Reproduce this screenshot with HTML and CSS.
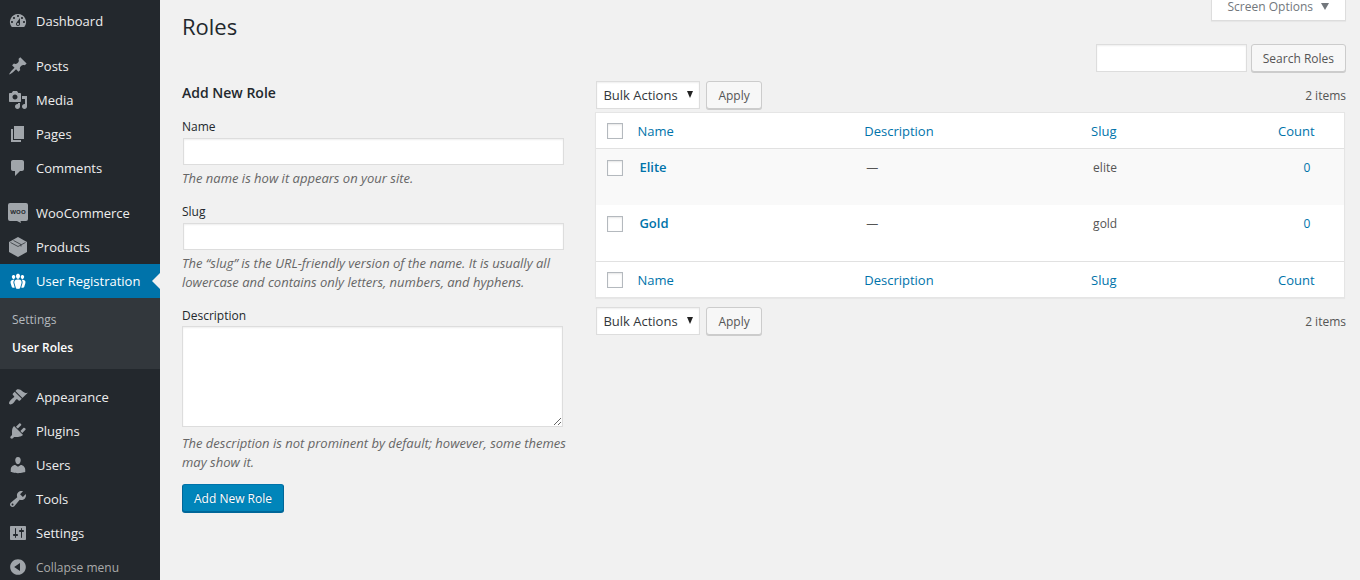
FILE: index.html
```html
<!DOCTYPE html>
<html lang="en">
<head>
    <meta charset="utf-8">
    <title>Roles</title>
    <link rel="stylesheet" href="styles.css">
</head>
<body>
    <nav class="admin-menu">
        <ul class="menu">
            <li><a href="#" class="menu-link">
                <svg class="icon" viewBox="0 0 20 20"><path fill-rule="evenodd" d="M3.76 16h12.48A7.998 7.998 0 0 0 10 3a7.998 7.998 0 0 0-6.24 13zM10 4c.55 0 1 .45 1 1s-.45 1-1 1-1-.45-1-1 .45-1 1-1zM6 6c.55 0 1 .45 1 1s-.45 1-1 1-1-.45-1-1 .45-1 1-1zm8 0c.55 0 1 .45 1 1s-.45 1-1 1-1-.45-1-1 .45-1 1-1zm-5.37 5.55L12 7v6c0 1.1-.9 2-2 2s-2-.9-2-2c0-.57.24-1.08.63-1.45zM4 10c.55 0 1 .45 1 1s-.45 1-1 1-1-.45-1-1 .45-1 1-1zm12 0c.55 0 1 .45 1 1s-.45 1-1 1-1-.45-1-1 .45-1 1-1zm-5 3c0-.55-.45-1-1-1s-1 .45-1 1 .45 1 1 1 1-.45 1-1z"/></svg>
                Dashboard</a></li>
            <li class="separator"></li>
            <li><a href="#" class="menu-link">
                <svg class="icon" viewBox="0 0 20 20"><path d="M10.44 3.02l1.82-1.82 6.36 6.35-1.83 1.82c-1.05-.68-2.48-.57-3.41.36l-.75.75c-.92.93-1.04 2.35-.35 3.41l-1.83 1.82-2.41-2.41-2.8 2.79c-.42.42-3.38 2.71-3.8 2.29s1.86-3.39 2.28-3.81l2.79-2.79L4.1 9.36l1.83-1.82c1.05.69 2.48.57 3.4-.36l.75-.75c.93-.92 1.05-2.35.36-3.41z"/></svg>
                Posts</a></li>
            <li><a href="#" class="menu-link">
                <svg class="icon" viewBox="0 0 20 20"><path fill-rule="evenodd" d="M13 11V4c0-.55-.45-1-1-1h-1.67L9 1H5L3.67 3H2c-.55 0-1 .45-1 1v7c0 .55.45 1 1 1h10c.55 0 1-.45 1-1zM7 4.5c1.38 0 2.5 1.12 2.5 2.5S8.38 9.5 7 9.5 4.5 8.38 4.5 7 5.62 4.5 7 4.5zM14 6h5v10.5c0 1.38-1.12 2.5-2.5 2.5S14 17.88 14 16.5s1.12-2.5 2.5-2.5c.17 0 .34.02.5.05V9h-3V6zM10 14.05V13h2v3.5c0 1.38-1.12 2.5-2.5 2.5S7 17.88 7 16.5 8.12 14 9.5 14c.17 0 .34.02.5.05z"/></svg>
                Media</a></li>
            <li><a href="#" class="menu-link">
                <svg class="icon" viewBox="0 0 20 20"><path d="M6 15V2h10v13H6zM5 16h8v2H3V5h2v11z"/></svg>
                Pages</a></li>
            <li><a href="#" class="menu-link">
                <svg class="icon" viewBox="0 0 20 20"><path d="M5 2h9c1.1 0 2 .9 2 2v7c0 1.1-.9 2-2 2h-2l-5 5v-5H5c-1.1 0-2-.9-2-2V4c0-1.1.9-2 2-2z"/></svg>
                Comments</a></li>
            <li class="separator"></li>
            <li><a href="#" class="menu-link">
                <svg class="icon" viewBox="0 0 20 20"><path d="M2 0h16a2 2 0 0 1 2 2v14a2 2 0 0 1-2 2h-5.500l.5 2-4-2H2a2 2 0 0 1-2-2V2a2 2 0 0 1 2-2z"/><text class="woo" x="10" y="11" text-anchor="middle">WOO</text></svg>
                WooCommerce</a></li>
            <li><a href="#" class="menu-link">
                <svg class="icon" viewBox="0 0 20 20"><path d="M10 0l9 5v10l-9 5-9-5V5z"/><path class="cut" d="M2.500 5.500L10 9.500l7.500-4M5.500 3.500l7.500 4v2"/></svg>
                Products</a></li>
            <li><a href="#" class="menu-link current">
                <svg class="icon" viewBox="0 0 20 20"><path d="M8.030 4.460c-.29 1.280.55 3.460 1.970 3.460 1.410 0 2.250-2.180 1.960-3.460-.22-.98-1.080-1.630-1.960-1.630-.89 0-1.740.65-1.970 1.630zm-4.130.9c-.25 1.080.47 2.930 1.670 2.930s1.920-1.850 1.670-2.930c-.19-.83-.92-1.390-1.670-1.390s-1.480.56-1.670 1.390zm8.860 0c-.25 1.080.47 2.930 1.660 2.930 1.200 0 1.920-1.850 1.670-2.930-.19-.83-.92-1.390-1.670-1.390-.74 0-1.470.56-1.660 1.390zm-.59 11.430l1.250-4.300C14.200 10 12.710 8.470 10 8.470c-2.720 0-4.210 1.530-3.440 4.020l1.260 4.300C8.050 17.510 9 18 10 18c.98 0 1.940-.49 2.170-1.210zm-6.100-7.630c-.49.67-.96 1.830-.42 3.590l1.120 3.790c-.34.2-.77.31-1.200.31-.85 0-1.650-.41-1.850-1.030l-1.070-3.650c-.65-2.110.61-3.400 2.920-3.400.27 0 .54.02.79.06-.1.1-.2.22-.29.33zm8.350-.39c2.310 0 3.580 1.290 2.920 3.400l-1.070 3.650c-.2.62-1 1.030-1.850 1.030-.43 0-.86-.11-1.200-.31l1.110-3.770c.55-1.780.08-2.940-.42-3.610-.08-.11-.18-.23-.28-.33.25-.04.51-.06.79-.06z"/></svg>
                User Registration</a>
                <ul class="submenu">
                    <li><a href="#">Settings</a></li>
                    <li><a href="#" class="active">User Roles</a></li>
                </ul>
            </li>
            <li class="separator"></li>
            <li><a href="#" class="menu-link">
                <svg class="icon" viewBox="0 0 20 20"><path d="M14.480 11.060L7.410 3.990l1.500-1.500c.5-.56 2.300-.47 3.510.32 1.210.8 1.430 1.280 2.910 2.100 1.180.64 2.450 1.260 4.450.85zm-.71.71L6.700 4.700 4.930 6.470c-.39.39-.39 1.020 0 1.410l1.060 1.060c.39.39.39 1.030 0 1.420-.6.6-1.430 1.110-2.210 1.690-.35.26-.7.53-1.010.84C1.430 14.230.4 16.080 1.400 17.070c.99 1 2.840-.03 4.180-1.360.31-.31.58-.66.85-1.020.57-.78 1.080-1.610 1.690-2.210.39-.39 1.020-.39 1.410 0l1.060 1.060c.39.39 1.020.39 1.410 0z"/></svg>
                Appearance</a></li>
            <li><a href="#" class="menu-link">
                <svg class="icon" viewBox="0 0 20 20"><path d="M13.110 4.360L9.870 7.600 8 5.730l3.240-3.240c.35-.34 1.050-.2 1.560.32.52.51.66 1.210.31 1.550zm-8 1.770l.91-1.120 9.010 9.010-1.190.84c-.71.71-2.630 1.160-3.820 1.160H6.140L4.900 17.260c-.59.59-1.540.59-2.120 0-.59-.58-.59-1.530 0-2.120l1.240-1.240v-3.880c0-1.130.4-3.190 1.090-3.890zm7.260 3.970l3.240-3.240c.34-.35 1.040-.21 1.550.31.52.51.66 1.210.31 1.550l-3.240 3.250z"/></svg>
                Plugins</a></li>
            <li><a href="#" class="menu-link">
                <svg class="icon" viewBox="0 0 20 20"><path d="M10 9.250c-2.270 0-2.730-3.440-2.730-3.440C7 4.020 7.820 2 9.970 2c2.160 0 2.980 2.020 2.710 3.810 0 0-.41 3.440-2.680 3.440zm0 2.570L12.720 10c2.390 0 4.520 2.330 4.520 4.530v2.490s-3.650 1.130-7.240 1.130c-3.650 0-7.240-1.130-7.240-1.130v-2.490c0-2.250 1.940-4.480 4.470-4.480z"/></svg>
                Users</a></li>
            <li><a href="#" class="menu-link">
                <svg class="icon" viewBox="0 0 20 20"><path fill-rule="evenodd" d="M16.680 9.770c-1.340 1.340-3.300 1.670-4.950.99l-5.410 6.520c-.99.99-2.590.99-3.580 0s-.99-2.590 0-3.570l6.520-5.420c-.68-1.650-.35-3.610.99-4.950 1.280-1.280 3.120-1.620 4.720-1.060l-2.890 2.890 2.820 2.820 2.860-2.870c.53 1.580.18 3.390-1.080 4.650zM3.810 16.210c.4.39 1.040.39 1.430 0 .4-.4.4-1.040 0-1.430-.39-.4-1.030-.4-1.430 0-.39.39-.39 1.030 0 1.430z"/></svg>
                Tools</a></li>
            <li><a href="#" class="menu-link">
                <svg class="icon" viewBox="0 0 20 20"><path fill-rule="evenodd" d="M18 16V4c0-.55-.45-1-1-1H3c-.55 0-1 .45-1 1v12c0 .55.45 1 1 1h14c.55 0 1-.45 1-1zM8 11h1c.55 0 1 .45 1 1s-.45 1-1 1H8v1.500c0 .28-.22.5-.5.5s-.5-.22-.5-.5V13H6c-.55 0-1-.45-1-1s.45-1 1-1h1V5.500c0-.28.22-.5.5-.5s.5.22.5.5V11zm5-2h-1c-.55 0-1-.45-1-1s.45-1 1-1h1V5.500c0-.28.22-.5.5-.5s.5.22.5.5V7h1c.55 0 1 .45 1 1s-.45 1-1 1h-1v5.500c0 .28-.22.5-.5.5s-.5-.22-.5-.5V9z"/></svg>
                Settings</a></li>
            <li><button type="button" class="menu-link collapse">
                <svg class="icon" viewBox="0 0 20 20"><path fill-rule="evenodd" d="M10 2.160c4.330 0 7.840 3.510 7.840 7.840s-3.510 7.840-7.840 7.840S2.160 14.330 2.160 10 5.710 2.160 10 2.160zm2 11.720V6.120L6.180 9.970z"/></svg>
                Collapse menu</button></li>
        </ul>
    </nav>

    <main class="content">
        <div class="page-header">
            <h1>Roles</h1>
            <button type="button" class="screen-options">Screen Options <svg class="caret" viewBox="0 0 8 7"><path d="M0 0h8L4 7z"/></svg></button>
        </div>

        <form class="search-box">
            <input type="search" class="text-input" aria-label="Search Roles">
            <button type="submit" class="button">Search Roles</button>
        </form>

        <div class="columns">
            <form class="add-role">
                <h2>Add New Role</h2>
                <div class="form-field">
                    <label for="role-name">Name</label>
                    <input type="text" id="role-name" class="text-input">
                    <p>The name is how it appears on your site.</p>
                </div>
                <div class="form-field">
                    <label for="role-slug">Slug</label>
                    <input type="text" id="role-slug" class="text-input">
                    <p>The “slug” is the URL-friendly version of the name. It is usually all lowercase and contains only letters, numbers, and hyphens.</p>
                </div>
                <div class="form-field">
                    <label for="role-description">Description</label>
                    <textarea id="role-description" class="text-input"></textarea>
                    <p>The description is not prominent by default; however, some themes may show it.</p>
                </div>
                <button type="submit" class="button button-primary">Add New Role</button>
            </form>

            <section class="role-list">
                <div class="table-nav">
                    <select class="bulk-select" aria-label="Bulk action">
                        <option>Bulk Actions</option>
                        <option>Delete</option>
                    </select>
                    <button type="button" class="button">Apply</button>
                    <span class="item-count">2 items</span>
                </div>

                <table class="roles-table">
                    <thead>
                        <tr>
                            <th class="col-check"><input type="checkbox" aria-label="Select all"></th>
                            <th><a href="#">Name</a></th>
                            <th><a href="#">Description</a></th>
                            <th class="col-slug"><a href="#">Slug</a></th>
                            <th class="col-count"><a href="#">Count</a></th>
                        </tr>
                    </thead>
                    <tbody>
                        <tr>
                            <td class="col-check"><input type="checkbox" aria-label="Select Elite"></td>
                            <td><a href="#" class="row-title">Elite</a></td>
                            <td>—</td>
                            <td>elite</td>
                            <td class="col-count"><a href="#">0</a></td>
                        </tr>
                        <tr>
                            <td class="col-check"><input type="checkbox" aria-label="Select Gold"></td>
                            <td><a href="#" class="row-title">Gold</a></td>
                            <td>—</td>
                            <td>gold</td>
                            <td class="col-count"><a href="#">0</a></td>
                        </tr>
                    </tbody>
                    <tfoot>
                        <tr>
                            <th class="col-check"><input type="checkbox" aria-label="Select all"></th>
                            <th><a href="#">Name</a></th>
                            <th><a href="#">Description</a></th>
                            <th><a href="#">Slug</a></th>
                            <th class="col-count"><a href="#">Count</a></th>
                        </tr>
                    </tfoot>
                </table>

                <div class="table-nav bottom">
                    <select class="bulk-select" aria-label="Bulk action">
                        <option>Bulk Actions</option>
                        <option>Delete</option>
                    </select>
                    <button type="button" class="button">Apply</button>
                    <span class="item-count">2 items</span>
                </div>
            </section>
        </div>
    </main>
</body>
</html>
```

FILE: styles.css
```css
* {
    margin: 0;
    padding: 0;
    box-sizing: border-box;
}

body {
    display: flex;
    height: 100vh;
    overflow: hidden;
    background: #f1f1f1;
    color: #444;
    font-family: 'Segoe UI', 'Open Sans', sans-serif;
    font-size: 12px;
    line-height: 19px;
}

button,
input,
select,
textarea {
    font: inherit;
    color: inherit;
}

a {
    color: #0073aa;
    text-decoration: none;
}

ul {
    list-style: none;
}

/* Admin menu */
.admin-menu {
    flex: 0 0 160px;
    background: #23282d;
    overflow: hidden;
}

.menu {
    padding-top: 4px;
}

.menu-link {
    position: relative;
    display: flex;
    align-items: center;
    gap: 8px;
    width: 100%;
    height: 34px;
    padding: 0 8px;
    color: #eee;
    font-size: 13px;
    white-space: nowrap;
}

.icon {
    flex: none;
    width: 20px;
    height: 20px;
    fill: #a0a5aa;
}

.cut {
    fill: none;
    stroke: #23282d;
    stroke-width: 1;
    opacity: 0.7;
}

.woo {
    fill: #23282d;
    font-size: 6px;
    font-weight: 700;
}

.separator {
    height: 11px;
}

.menu-link.current {
    background: #0073aa;
    color: #fff;
}

.menu-link.current .icon {
    fill: #fff;
}

.menu-link.current::after {
    content: '';
    position: absolute;
    right: 0;
    top: 9px;
    border: 8px solid transparent;
    border-left: 0;
    border-right-color: #f1f1f1;
}

.submenu {
    padding: 8px 0 7px;
    background: #32373c;
}

.submenu a {
    display: block;
    padding: 0 12px;
    color: #b4b9be;
    font-size: 12px;
    line-height: 28px;
}

.submenu a.active {
    color: #fff;
    font-weight: 600;
}

.collapse {
    border: none;
    background: none;
    color: #aaa;
    font-size: 12px;
    cursor: pointer;
}

/* Page content */
.content {
    flex: 1;
    min-width: 0;
    padding: 0 14px 0 22px;
}

.page-header {
    display: flex;
    justify-content: space-between;
    align-items: flex-start;
    height: 44px;
}

h1 {
    padding-top: 11px;
    color: #23282d;
    font-size: 22px;
    font-weight: 400;
    line-height: 30px;
}

.screen-options {
    display: flex;
    align-items: center;
    gap: 8px;
    height: 21px;
    padding: 0 16px 8px;
    border: 1px solid #ddd;
    border-top: none;
    background: #fff;
    color: #72777c;
    box-shadow: 0 1px 1px rgba(0,0,0,0.04);
    cursor: pointer;
}

.caret {
    width: 8px;
    height: 7px;
    fill: #72777c;
}

.text-input {
    padding: 3px 5px;
    border: 1px solid #ddd;
    background: #fff;
    box-shadow: inset 0 1px 2px rgba(0,0,0,0.07);
}

.button {
    height: 28px;
    padding: 0 11px;
    border: 1px solid #ccc;
    border-radius: 3px;
    background: #f7f7f7;
    color: #555;
    box-shadow: 0 1px 0 #ccc;
    white-space: nowrap;
    cursor: pointer;
}

.button-primary {
    border-color: #0073aa #006799 #006799;
    background: #0085ba;
    color: #fff;
    box-shadow: 0 1px 0 #006799;
    text-shadow: 0 -1px 1px #006799;
}

.search-box {
    display: flex;
    justify-content: flex-end;
    gap: 4px;
}

.search-box .text-input {
    width: 151px;
    height: 28px;
}

.columns {
    display: flex;
    padding-top: 9px;
}

/* Add form */
.add-role {
    flex: 0 0 35%;
    padding-right: 21px;
}

h2 {
    margin: 2px 0 14px;
    color: #23282d;
    font-size: 14px;
    font-weight: 600;
    line-height: 20px;
}

.form-field {
    margin-bottom: 14px;
}

.form-field:last-of-type {
    margin-bottom: 12px;
}

.form-field label {
    display: block;
    color: #23282d;
}

.form-field input {
    display: block;
    width: calc(100% - 5px);
    height: 27px;
    margin: 2px 0 4px 1px;
}

.form-field textarea {
    display: block;
    width: calc(100% - 5px);
    height: 101px;
    margin: 1px 0 7px;
}

.form-field p {
    color: #666;
    font-size: 13px;
    font-style: italic;
}

/* Role list */
.role-list {
    flex: 1;
    min-width: 0;
    padding: 0 1px 0 6px;
}

.table-nav {
    display: flex;
    align-items: center;
    gap: 6px;
    height: 28px;
    margin: 0 -1px 3px 1px;
}

.table-nav.bottom {
    margin-top: 9px;
}

.bulk-select {
    width: 104px;
    height: 28px;
    padding: 0 6px;
    border: 1px solid #ddd;
    appearance: none;
    background: #fff url("data:image/svg+xml,%3Csvg xmlns='http://www.w3.org/2000/svg' width='6' height='7'%3E%3Cpath d='M0 0h6L3 7z' fill='%23222'/%3E%3C/svg%3E") no-repeat right 6px top 9px;
    color: #32373c;
    font-size: 13px;
    box-shadow: inset 0 1px 2px rgba(0,0,0,0.07);
}

.item-count {
    margin-left: auto;
    color: #555;
}

.roles-table {
    width: 100%;
    border: 1px solid #e5e5e5;
    border-spacing: 0;
    table-layout: fixed;
    background: #fff;
    box-shadow: 0 1px 1px rgba(0,0,0,0.04);
    color: #555;
}

.roles-table th {
    height: 36px;
    padding: 1px 8px 0;
    font-size: 13px;
    font-weight: 400;
    text-align: left;
}

.roles-table thead th {
    border-bottom: 1px solid #e1e1e1;
}

.roles-table tfoot th {
    border-top: 1px solid #e1e1e1;
}

.roles-table td {
    height: 56px;
    padding: 9px 10px;
    vertical-align: top;
}

.roles-table tbody tr:nth-child(odd) {
    background: #f9f9f9;
}

.roles-table .col-check {
    width: 33px;
    padding-left: 11px;
    padding-right: 0;
}

.roles-table td.col-check {
    padding-top: 11px;
}

.col-slug {
    width: 25%;
}

.col-count {
    width: 74px;
}

td.col-count {
    text-align: center;
}

.row-title {
    font-size: 13px;
    font-weight: 600;
}

input[type="checkbox"] {
    display: block;
    width: 16px;
    height: 16px;
    border: 1px solid #b4b9be;
    appearance: none;
    background: #fff;
    box-shadow: inset 0 1px 2px rgba(0,0,0,0.1);
}
```
